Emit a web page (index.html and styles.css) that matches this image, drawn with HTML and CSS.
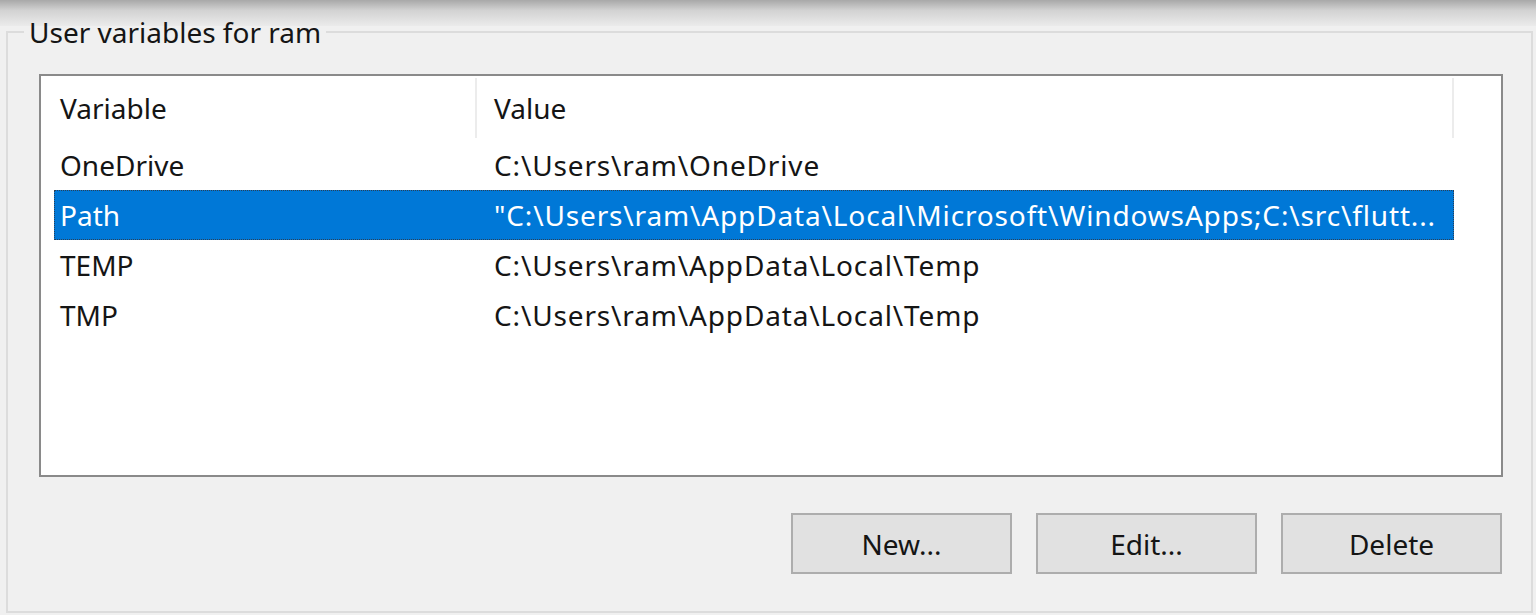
FILE: index.html
```html
<!DOCTYPE html>
<html lang="en">
<head>
<meta charset="utf-8">
<title>User variables</title>
<link rel="stylesheet" href="styles.css">
</head>
<body>
<div class="topshade"></div>
<fieldset class="group">
  <legend class="group-title">User variables for ram</legend>
  <div class="listbox">
    <div class="list-header">
      <div class="hcell col-var">Variable</div>
      <div class="hcell col-val">Value</div>
    </div>
    <div class="row"><div class="cell col-var">OneDrive</div><div class="cell col-val">C:\Users\ram\OneDrive</div></div>
    <div class="row selected"><div class="cell col-var">Path</div><div class="cell col-val">"C:\Users\ram\AppData\Local\Microsoft\WindowsApps;C:\src\flutt...</div></div>
    <div class="row"><div class="cell col-var">TEMP</div><div class="cell col-val">C:\Users\ram\AppData\Local\Temp</div></div>
    <div class="row"><div class="cell col-var">TMP</div><div class="cell col-val">C:\Users\ram\AppData\Local\Temp</div></div>
  </div>
  <div class="buttons">
    <button class="btn">New...</button>
    <button class="btn">Edit...</button>
    <button class="btn">Delete</button>
  </div>
</fieldset>
</body>
</html>
```
FILE: styles.css
```css
html, body {
  margin: 0;
  padding: 0;
}
body {
  width: 1536px;
  height: 615px;
  overflow: hidden;
  background: #f0f0f0;
  font-family: "Noto Sans", "Open Sans", sans-serif;
  font-size: 28px;
  color: #151515;
}
.topshade {
  height: 26px;
  background: linear-gradient(#a8a8a8 0%, #d2d2d2 40%, #ebebeb 100%);
  margin-bottom: -26px;
}
.group {
  margin: 16px 0 0 6px;
  width: 1527px;
  height: 597px;
  box-sizing: border-box;
  border: 2px solid #dcdcdc;
  padding: 0;
  min-width: 0;
}
.group-title {
  margin-left: 16px;
  padding: 0 5px;
  line-height: 32px;
}
.listbox {
  margin: 26px 0 0 31px;
  width: 1464px;
  height: 403px;
  box-sizing: border-box;
  border: 2px solid #8a8a8a;
  background: #fff;
  padding-left: 13px;
}
.list-header {
  display: flex;
  height: 64px;
  align-items: stretch;
}
.hcell {
  display: flex;
  align-items: center;
  box-sizing: border-box;
  border-right: 2px solid #ececec;
  margin: 2px 0 2px;
}
.col-var {
  width: 423px;
  padding-left: 6px;
  box-sizing: border-box;
}
.col-val {
  width: 977px;
  padding-left: 17px;
  box-sizing: border-box;
  white-space: nowrap;
  overflow: hidden;
}
.cell.col-val {
  letter-spacing: 0.85px;
}
.row {
  display: flex;
  height: 50px;
  align-items: center;
  width: 1400px;
  box-sizing: border-box;
}
.row.selected {
  background: #0078d7;
  color: #fff;
  outline: 1px dotted #2b3f55;
  outline-offset: -1px;
}
.buttons {
  display: flex;
  justify-content: flex-end;
  gap: 24px;
  margin: 36px 29px 0 0;
}
.btn {
  width: 221px;
  height: 61px;
  box-sizing: border-box;
  border: 2px solid #adadad;
  background: #e1e1e1;
  font-family: inherit;
  font-size: 28px;
  color: #151515;
  padding: 0;
}
```
